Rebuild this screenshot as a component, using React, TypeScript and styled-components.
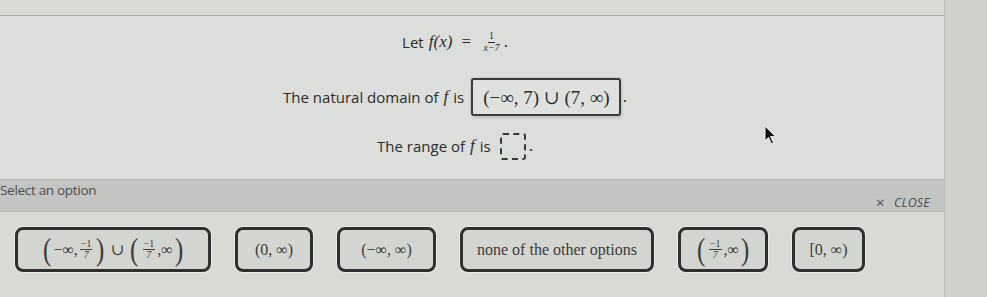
import React, { FC, ReactNode } from "react";
import styled, { createGlobalStyle } from "styled-components";

const GlobalStyle = createGlobalStyle`
  html, body {
    margin: 0;
    padding: 0;
    background: #cfd1cd;
  }
  * { box-sizing: border-box; }
`;

const Page = styled.div`
  position: relative;
  width: 987px;
  height: 297px;
  overflow: hidden;
  display: flex;
  background: #cfd1cd;
`;

const Screen = styled.div`
  width: 945px;
  height: 297px;
  display: flex;
  flex-direction: column;
  background: #dcdedb;
  border-right: 1px solid #b9bbb7;
`;

const TopRule = styled.div`
  height: 16px;
  border-bottom: 1px solid #a9aba7;
  background: #d9dbd7;
`;

const Question = styled.div`
  height: 163px;
  display: flex;
  flex-direction: column;
  align-items: center;
  padding-right: 34px;
  font-family: "Open Sans", "Liberation Sans", sans-serif;
  font-size: 15px;
  color: #2c2c2c;
`;

const Line = styled.div<{ $h: number }>`
  height: ${(p) => p.$h}px;
  display: flex;
  align-items: center;
  gap: 5px;
  white-space: nowrap;
`;

const MathI = styled.span`
  font-family: "Liberation Serif", "DejaVu Serif", serif;
  font-style: italic;
  font-size: 17px;
`;

const MathR = styled.span<{ $size?: number }>`
  font-family: "Liberation Serif", "DejaVu Serif", serif;
  font-size: ${(p) => p.$size ?? 17}px;
`;

const Frac = styled.span<{ $size?: number }>`
  display: inline-flex;
  flex-direction: column;
  align-items: center;
  vertical-align: middle;
  font-family: "Liberation Serif", serif;
  font-size: ${(p) => p.$size ?? 10}px;
  line-height: 1.05;
  margin: 0 2px;
`;

const Num = styled.span`
  padding: 0 1px;
  border-bottom: 1px solid currentColor;
`;

const Den = styled.span`
  font-style: italic;
  padding: 0 1px;
`;

const AnswerBox = styled.span`
  display: inline-flex;
  align-items: center;
  height: 38px;
  padding: 0 9px 0 10px;
  border: 2px solid #3a3a3a;
  border-radius: 3px;
  box-shadow: 0 0 0 1px #c9cbc7, 1px 2px 2px rgba(0, 0, 0, 0.15);
  background: #dfe1de;
  margin-left: 2px;
`;

const EmptyBox = styled.span`
  display: inline-block;
  width: 26px;
  height: 27px;
  border: 2px dashed #3a3a3a;
  border-radius: 3px;
  margin-left: 4px;
`;

const Bar = styled.div`
  height: 33px;
  display: flex;
  align-items: flex-start;
  justify-content: space-between;
  padding: 0 14px 0 0;
  background: #c3c5c2;
  border-top: 1px solid #b6b8b4;
  border-bottom: 1px solid #b6b8b4;
  font-family: "Open Sans", "Liberation Sans", sans-serif;
  color: #4c4d4b;
`;

const BarTitle = styled.span`
  font-size: 13.5px;
  margin-top: 1px;
  letter-spacing: -0.3px;
`;

const CloseBtn = styled.span`
  display: flex;
  align-items: center;
  gap: 9px;
  font-size: 12.5px;
  font-style: italic;
  letter-spacing: 0.2px;
  margin-top: 12px;
`;

const Options = styled.div`
  flex: 1;
  display: flex;
  align-items: flex-start;
  gap: 24px;
  padding: 15px 0 0 15px;
  background: #d8dad6;
`;

const OptionBtn = styled.div<{ $w: number }>`
  width: ${(p) => p.$w}px;
  height: 45px;
  display: flex;
  align-items: center;
  justify-content: center;
  border: 3px solid #2e2f2e;
  border-radius: 8px;
  background: #d3d5d1;
  box-shadow: 0 0 0 1px #e9ebe8;
  font-family: "Liberation Serif", "DejaVu Serif", serif;
  font-size: 16px;
  color: #3a3b3a;
  white-space: nowrap;
`;

const BigParen = styled.span`
  font-size: 31px;
  line-height: 1;
  font-weight: 300;
  transform: scaleX(0.8);
  display: inline-block;
  margin: 0 1px;
`;

const Cursor = styled.svg`
  position: absolute;
  left: 764px;
  top: 125px;
`;

const Opt: FC<{ w: number; children: ReactNode }> = ({ w, children }) => (
  <OptionBtn $w={w}>{children}</OptionBtn>
);

const NegSeventh: FC = () => (
  <Frac $size={10}>
    <Num>−1</Num>
    <Den>7</Den>
  </Frac>
);

export default function App() {
  return (
    <>
      <GlobalStyle />
      <Page>
        <Screen>
          <TopRule />
          <Question>
            <Line $h={52}>
              <span>Let</span>
              <MathI>
                f<MathR>(</MathR>x<MathR>)</MathR>
              </MathI>
              <MathR>&nbsp;=&nbsp;</MathR>
              <Frac>
                <Num>1</Num>
                <Den>x−7</Den>
              </Frac>
              <MathR style={{ marginLeft: -4 }}>.</MathR>
            </Line>
            <Line $h={58}>
              <span>The natural domain of</span>
              <MathI>f</MathI>
              <span>is</span>
              <AnswerBox>
                <MathR $size={19}>(−∞, 7) ∪ (7, ∞)</MathR>
              </AnswerBox>
              <MathR style={{ marginLeft: -3 }}>.</MathR>
            </Line>
            <Line $h={40}>
              <span>The range of</span>
              <MathI>f</MathI>
              <span>is</span>
              <EmptyBox />
              <MathR style={{ marginLeft: -2 }}>.</MathR>
            </Line>
          </Question>
          <Bar>
            <BarTitle>Select an option</BarTitle>
            <CloseBtn>
              <span style={{ fontStyle: "normal", fontSize: 15 }}>×</span>
              CLOSE
            </CloseBtn>
          </Bar>
          <Options>
            <Opt w={196}>
              <BigParen>(</BigParen>−∞,
              <NegSeventh />
              <BigParen>)</BigParen>
              <span style={{ margin: "0 4px" }}>∪</span>
              <BigParen>(</BigParen>
              <NegSeventh />
              ,∞
              <BigParen>)</BigParen>
            </Opt>
            <Opt w={78}>(0, ∞)</Opt>
            <Opt w={99}>(−∞, ∞)</Opt>
            <Opt w={194}>none of the other options</Opt>
            <Opt w={90}>
              <BigParen>(</BigParen>
              <NegSeventh />
              ,∞
              <BigParen>)</BigParen>
            </Opt>
            <Opt w={73}>[0, ∞)</Opt>
          </Options>
        </Screen>
        <Cursor width="14" height="22" viewBox="0 0 14 22">
          <path
            d="M1 1 L1 16 L4.5 12.5 L7.5 19 L9.5 18 L6.6 11.6 L11.5 11.6 Z"
            fill="#111"
            stroke="#eee"
            strokeWidth="1"
          />
        </Cursor>
      </Page>
    </>
  );
}
